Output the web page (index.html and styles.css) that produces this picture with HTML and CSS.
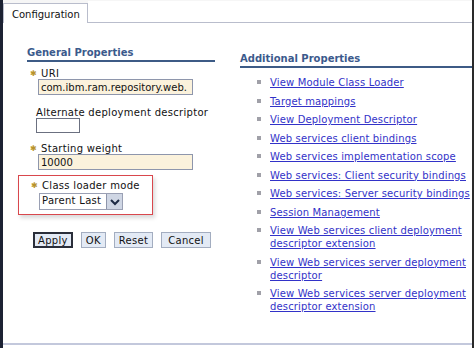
FILE: index.html
```html
<!DOCTYPE html>
<html>
<head>
    <meta charset="utf-8">
    <title>Configuration</title>
    <link rel="stylesheet" href="styles.css">
</head>
<body>
    <div class="frame">
        <div class="tabs">
            <div class="tab">Configuration</div>
            <div class="tab-rest"></div>
        </div>

        <div class="content">
            <div class="general">
                <h2 class="section-title">General Properties</h2>

                <div class="field">
                    <label><span class="req">&#10033;</span>URI</label>
                    <input type="text" class="wide" value="com.ibm.ram.repository.web.">
                </div>

                <div class="field plain">
                    <label>Alternate deployment descriptor</label>
                    <input type="text" class="small">
                </div>

                <div class="field weight">
                    <label><span class="req">&#10033;</span>Starting weight</label>
                    <input type="text" class="wide" value="10000">
                </div>

                <div class="highlight">
                    <label><span class="req">&#10033;</span>Class loader mode</label>
                    <div class="select">
                        <span class="select-value">Parent Last</span>
                        <span class="select-btn">
                            <svg width="12" height="10" viewBox="0 0 12 10"><path d="M2 3 L6 7 L10 3" fill="none" stroke="#1d2a44" stroke-width="2"/></svg>
                        </span>
                    </div>
                </div>

                <div class="buttons">
                    <button type="button" class="btn primary">Apply</button>
                    <button type="button" class="btn">OK</button>
                    <button type="button" class="btn">Reset</button>
                    <button type="button" class="btn">Cancel</button>
                </div>
            </div>

            <div class="additional">
                <h2 class="section-title">Additional Properties</h2>
                <ul class="links">
                    <li><a href="#">View Module Class Loader</a></li>
                    <li><a href="#">Target mappings</a></li>
                    <li><a href="#">View Deployment Descriptor</a></li>
                    <li><a href="#">Web services client bindings</a></li>
                    <li><a href="#">Web services implementation scope</a></li>
                    <li><a href="#">Web services: Client security bindings</a></li>
                    <li><a href="#">Web services: Server security bindings</a></li>
                    <li><a href="#">Session Management</a></li>
                    <li><a href="#">View Web services client deployment<br>descriptor extension</a></li>
                    <li><a href="#">View Web services server deployment<br>descriptor</a></li>
                    <li><a href="#">View Web services server deployment<br>descriptor extension</a></li>
                </ul>
            </div>
        </div>
    </div>
</body>
</html>
```

FILE: styles.css
```css
body {
    margin: 0;
    background: #fff;
    font-family: "DejaVu Sans", Verdana, sans-serif;
    font-size: 10px;
    color: #111;
    overflow: hidden;
}
.frame {
    width: 469px;
    height: 348px;
    border-left: 3px solid #1c2233;
    border-right: 2px solid #2a2a2a;
    box-sizing: content-box;
    display: flex;
    flex-direction: column;
    position: relative;
}
.frame::after {
    content: "";
    position: absolute;
    left: 0;
    right: 0;
    top: 343px;
    height: 2px;
    background: #c3c8dc;
}
.tabs {
    display: flex;
    align-items: flex-end;
    height: 23px;
    background: #f6f6f6;
}
.tab {
    width: 85px;
    height: 20px;
    border: 1px solid #b9bdcc;
    border-bottom: none;
    background: #fff;
    box-sizing: border-box;
    padding: 5px 0 0 8px;
    font-size: 10px;
    color: #111;
}
.tab-rest {
    flex: 1;
    height: 22px;
    background: #fff;
    border-bottom: 1px solid #b9bdcc;
    box-sizing: border-box;
}
.content {
    display: flex;
    padding-top: 24px;
}
.general {
    width: 201px;
    flex: none;
    padding-left: 24px;
}
.additional {
    flex: 1;
    padding-left: 12px;
    padding-top: 6px;
}
.section-title {
    margin: 0;
    font-size: 10px;
    font-weight: bold;
    color: #3b5a8c;
    padding-bottom: 2px;
    border-bottom: 2px solid #3d5b86;
}
.general .section-title {
    width: 188px;
}
.field {
    margin-top: 5px;
    padding-left: 3px;
}
.field.plain {
    margin-top: 11px;
    padding-left: 9px;
}
.field.weight {
    margin-top: 9px;
}
label {
    display: block;
    color: #111;
    line-height: 13px;
    letter-spacing: 0.3px;
}
.req {
    color: #b8932a;
    font-size: 8px;
    margin-right: 4px;
    vertical-align: 1px;
}
input[type="text"] {
    display: block;
    font-family: "DejaVu Sans", Verdana, sans-serif;
    font-size: 10px;
    height: 16px;
    box-sizing: border-box;
    padding: 0 2px;
    margin-top: -1px;
    border: 1px solid #8e96ac;
    color: #111;
}
input.wide {
    width: 155px;
    margin-left: 8px;
    background: #fbf2dc;
}
input.small {
    width: 44px;
    height: 15px;
    background: #fff;
    border-color: #6b7080;
}
.highlight {
    margin: 5px 0 0 -9px;
    width: 135px;
    height: 40px;
    box-sizing: border-box;
    border: 1px solid #d9474d;
    padding: 3px 0 0 12px;
    box-shadow: 2px 3px 4px rgba(0, 0, 0, 0.15);
}
.select {
    display: flex;
    width: 84px;
    height: 17px;
    margin: 1px 0 0 8px;
    border: 1px solid #9aa0b4;
    box-sizing: border-box;
}
.select-value {
    flex: 1;
    padding: 1px 0 0 2px;
    letter-spacing: 0.3px;
}
.select-btn {
    width: 15px;
    background: #cfd6e4;
    border-left: 1px solid #8d95ab;
    display: flex;
    align-items: center;
    justify-content: center;
}
.buttons {
    display: flex;
    gap: 8px;
    margin: 17px 0 0 6px;
}
.btn {
    font-family: "DejaVu Sans", Verdana, sans-serif;
    font-size: 10px;
    height: 16px;
    padding: 0 4px;
    border: 1px solid #a3adc0;
    background: #e3eaf5;
    color: #111;
    letter-spacing: 0.3px;
}
.btn:last-child {
    padding: 0 6px;
}
.btn.primary {
    border: 2px solid #2a2e3a;
    padding: 0 3px;
}
.links {
    list-style: none;
    margin: 8px 0 0;
    padding: 0 0 0 16px;
}
.links li {
    position: relative;
    padding-left: 14px;
    line-height: 13px;
    margin-bottom: 5.5px;
    white-space: nowrap;
    letter-spacing: 0.15px;
}
.links li::before {
    content: "";
    position: absolute;
    left: 1px;
    top: 4px;
    width: 4px;
    height: 4px;
    background: #a0a0a8;
}
.links a {
    color: #3232c8;
    text-decoration: underline;
}
```
